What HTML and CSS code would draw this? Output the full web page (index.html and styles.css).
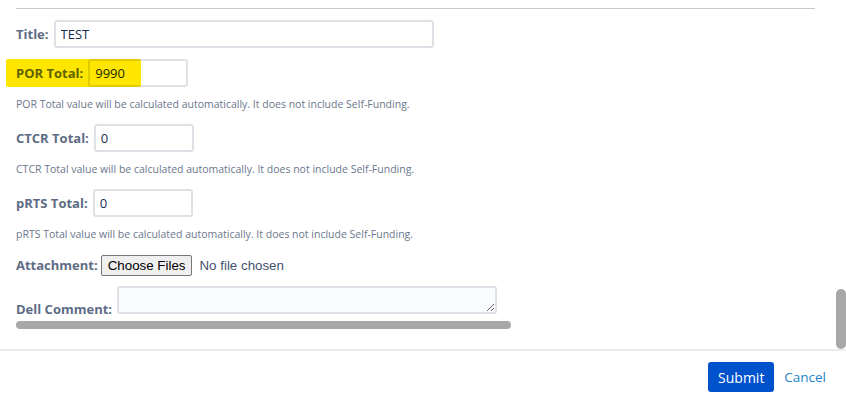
FILE: index.html
```html
<!DOCTYPE html>
<html lang="en">
<head>
<meta charset="utf-8">
<title>Form</title>
<link rel="stylesheet" href="styles.css">
</head>
<body>
<div class="dialog">
  <div class="content">
    <div class="form">
      <div class="rule"></div>
      <div class="field first">
        <label class="lbl">Title:</label> <input class="text wide" type="text" value="TEST">
      </div>
      <div class="field por">
        <label class="lbl">POR Total:</label> <input class="text short" type="text" value="9990">
        <span class="highlight"></span>
      </div>
      <div class="help">POR Total value will be calculated automatically. It does not include Self-Funding.</div>
      <div class="field">
        <label class="lbl">CTCR Total:</label> <input class="text short" type="text" value="0">
      </div>
      <div class="help">CTCR Total value will be calculated automatically. It does not include Self-Funding.</div>
      <div class="field">
        <label class="lbl">pRTS Total:</label> <input class="text short" type="text" value="0">
      </div>
      <div class="help">pRTS Total value will be calculated automatically. It does not include Self-Funding.</div>
      <div class="field attach">
        <label class="lbl">Attachment:</label> <button class="filebtn" type="button">Choose Files</button> <span class="nofile">No file chosen</span>
      </div>
      <div class="comment">
        <label class="lbl">Dell Comment:</label> <textarea class="area"></textarea>
      </div>
      <div class="hscroll"></div>
    </div>
    <div class="vthumb"></div>
  </div>
  <div class="footer">
    <button class="submit" type="button">Submit</button>
    <a class="cancel" href="#">Cancel</a>
  </div>
</div>
</body>
</html>
```

FILE: styles.css
```css
html, body {
  margin: 0;
  padding: 0;
  background: #ffffff;
}

body {
  font-family: "Open Sans", "Noto Sans", sans-serif;
  color: #172b4d;
  width: 846px;
  height: 400px;
  overflow: hidden;
}

.dialog {
  display: flex;
  flex-direction: column;
  height: 400px;
}

.content {
  position: relative;
  height: 349px;
  overflow: hidden;
}

.form {
  padding: 8px 0 0 16px;
}

.rule {
  width: 799px;
  height: 1px;
  background: #c9c9c9;
}

.field {
  position: relative;
  display: flex;
  align-items: center;
  height: 28px;
  margin-top: 11px;
}

.lbl {
  font-size: 13px;
  font-weight: 700;
  color: #5e6c84;
  margin-right: 5px;
  white-space: nowrap;
}

.text {
  box-sizing: border-box;
  height: 28px;
  border: 2px solid #dfe1e6;
  border-radius: 3px;
  background: #ffffff;
  font-family: inherit;
  font-size: 13px;
  color: #172b4d;
  padding: 0 5px;
  margin: 0;
  outline: none;
}

.wide {
  width: 380px;
}

.short {
  width: 100px;
}

.highlight {
  position: absolute;
  left: -10px;
  top: 0;
  width: 135px;
  height: 28px;
  background: #ffe600;
  border-radius: 2px;
  mix-blend-mode: multiply;
  pointer-events: none;
}

.help {
  font-size: 10.5px;
  line-height: 15px;
  color: #6b778c;
  margin: 10px 0 12px;
}

.help + .field {
  margin-top: 0;
}

.attach {
  height: 22px;
}

.attach .lbl {
  margin-right: 3px;
}

.filebtn {
  box-sizing: border-box;
  height: 21px;
  padding: 0 6px;
  margin: 0 7px 0 0;
  border: 1px solid #767676;
  border-radius: 2px;
  background: #efefef;
  font-family: "Liberation Sans", Arial, sans-serif;
  font-size: 13.33px;
  color: #000000;
}

.nofile {
  font-family: "Liberation Sans", Arial, sans-serif;
  font-size: 13.33px;
  color: #42526e;
}

.comment {
  margin-top: 10px;
  line-height: 16px;
}

.comment .lbl {
  margin-right: 1px;
}

.area {
  box-sizing: border-box;
  width: 380px;
  height: 28px;
  border: 2px solid #dfe1e6;
  border-radius: 3px;
  background: #fafbfc;
  margin: 0;
  padding: 4px 6px;
  vertical-align: baseline;
  font-family: inherit;
  font-size: 13px;
}

.hscroll {
  width: 495px;
  height: 8px;
  border-radius: 4px;
  background: #a8a8a8;
  margin-top: 4px;
}

.vthumb {
  position: absolute;
  left: 836px;
  top: 289px;
  width: 10px;
  height: 60px;
  border-radius: 5px;
  background: #a8a8a8;
}

.footer {
  border-top: 2px solid #ebecf0;
  display: flex;
  justify-content: flex-end;
  align-items: center;
  padding: 11px 20px 0 0;
}

.submit {
  box-sizing: border-box;
  height: 30px;
  width: 66px;
  border: none;
  border-radius: 3px;
  background: #0052cc;
  color: #ffffff;
  font-family: inherit;
  font-size: 14px;
  font-weight: 500;
  padding: 0;
}

.cancel {
  margin-left: 10px;
  font-size: 13.5px;
  color: #2684c9;
  text-decoration: none;
}
```
